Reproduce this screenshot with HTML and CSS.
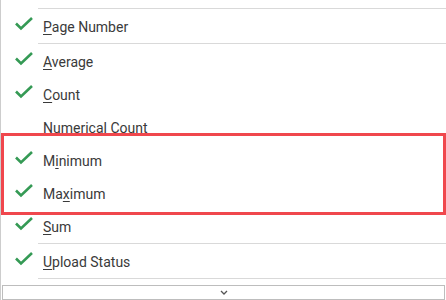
FILE: index.html
```html
<!DOCTYPE html>
<html>
<head>
  <meta charset="UTF-8">
  <title>Status Bar Options</title>
  <link rel="stylesheet" href="styles.css">
</head>
<body>
  <div class="menu">
    <div class="sep"></div>
    <div class="item"><span class="check"><svg viewBox="0 0 18 14"><path d="M1 6.5 L6 11.5 L17 1"/></svg></span><span class="label"><u>P</u>age Number</span></div>
    <div class="sep"></div>
    <div class="item"><span class="check"><svg viewBox="0 0 18 14"><path d="M1 6.5 L6 11.5 L17 1"/></svg></span><span class="label"><u>A</u>verage</span></div>
    <div class="item"><span class="check"><svg viewBox="0 0 18 14"><path d="M1 6.5 L6 11.5 L17 1"/></svg></span><span class="label"><u>C</u>ount</span></div>
    <div class="item"><span class="check"></span><span class="label">Numerical Count</span></div>
    <div class="item"><span class="check"><svg viewBox="0 0 18 14"><path d="M1 6.5 L6 11.5 L17 1"/></svg></span><span class="label">M<u>i</u>nimum</span></div>
    <div class="item"><span class="check"><svg viewBox="0 0 18 14"><path d="M1 6.5 L6 11.5 L17 1"/></svg></span><span class="label">Ma<u>x</u>imum</span></div>
    <div class="item"><span class="check"><svg viewBox="0 0 18 14"><path d="M1 6.5 L6 11.5 L17 1"/></svg></span><span class="label"><u>S</u>um</span></div>
    <div class="sep"></div>
    <div class="item"><span class="check"><svg viewBox="0 0 18 14"><path d="M1 6.5 L6 11.5 L17 1"/></svg></span><span class="label"><u>U</u>pload Status</span></div>
    <div class="sep"></div>
    <div class="more">
      <svg width="8" height="5" viewBox="0 0 8 5"><path d="M1 1 L4 4 L7 1" fill="none" stroke="#555" stroke-width="1.3"/></svg>
    </div>
  </div>

  <!-- highlight annotation -->
  <div class="highlight"></div>
</body>
</html>
```

FILE: styles.css
```css
* {
  margin: 0;
  padding: 0;
  box-sizing: border-box;
}

body {
  font-family: Roboto, 'Liberation Sans', sans-serif;
  font-size: 14px;
  color: #3a3a3a;
  background: #ffffff;
  width: 446px;
  height: 300px;
  overflow: hidden;
  border-left: 1px solid #cdcdcd;
  position: relative;
}

.menu {
  padding-top: 8px;
}

.sep {
  height: 2px;
  margin-left: 37px;
  border-top: 1px solid #d9d9d9;
}

.item {
  display: flex;
  align-items: center;
  height: 33px;
}

.check {
  width: 42px;
  height: 33px;
  flex-shrink: 0;
  padding: 7px 0 0 14px;
}

.check svg {
  display: block;
  width: 18px;
  height: 14px;
  fill: none;
  stroke: #359a55;
  stroke-width: 2.6;
}

.label u {
  text-decoration-thickness: 1px;
  text-underline-offset: 2px;
}

.more {
  margin: 5px 1px 0 1px;
  height: 15px;
  border: 1px solid #bdbdbd;
  display: flex;
  justify-content: center;
  align-items: center;
}

.highlight {
  position: absolute;
  left: 0;
  top: 133px;
  width: 445px;
  height: 82px;
  border: 3px solid #f0474d;
}
```
